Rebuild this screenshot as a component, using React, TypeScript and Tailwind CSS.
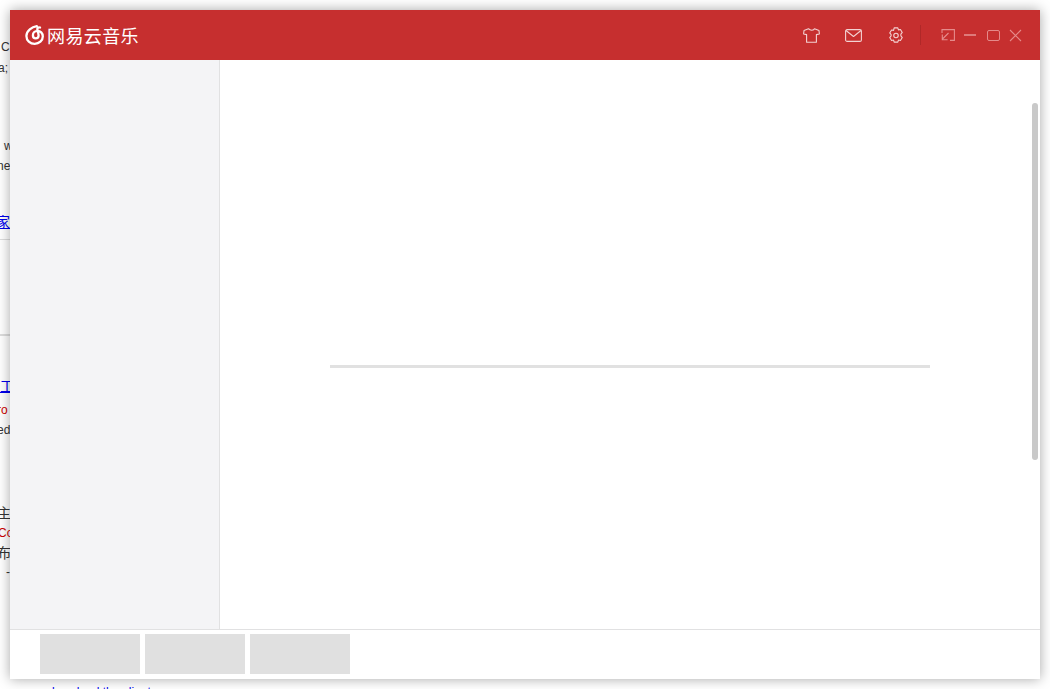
function Logo() {
  return (
    <svg width="20" height="20" viewBox="0 0 20 20" fill="none" stroke="#fff" strokeLinecap="round">
      <path d="M11.800 1.200C7 1.900 1.400 5.400 1.400 11c0 4.500 3.700 7.800 8.300 7.800 4.400 0 8.100-3.200 8.100-7.400 0-3.200-2.400-5.600-5.200-5.600-2.600 0-4.700 2-4.700 4.400 0 1.800 1.200 3.200 2.800 3.200s2.900-1.200 2.900-2.800c0-1.600-.7-4-1.200-6-.4-1.400.7-2.700 2.600-2.100" strokeWidth="2.300" />
    </svg>
  )
}

function HeaderIcons() {
  return (
    <div className="flex items-center">
      <svg className="mr-[25px]" width="17" height="15" viewBox="0 0 17 15" fill="none" stroke="#f3d2d2" strokeWidth="1.1" strokeLinejoin="round">
        <path d="M5.500.7 1 2.600.6 6l3 .6v7.600h9.800V6.600l3-.6-.4-3.400L11.500.7c-.5 2-4.500 2-6 0Z" />
      </svg>
      <svg className="mr-[26px]" width="17" height="13" viewBox="0 0 17 13" fill="none" stroke="#f3d2d2" strokeWidth="1.1" strokeLinejoin="round">
        <rect x=".6" y=".6" width="15.800" height="11.800" rx="1.500" />
        <path d="m1 1.500 7.500 6 7.500-6" />
      </svg>
      <svg className="mr-4" width="16" height="17" viewBox="0 0 15 16" fill="none" stroke="#f3d2d2" strokeWidth="1.050" strokeLinejoin="round">
        <path d="M5.800.8h3.400l.6 1.900 1.900-.4 1.700 2.800-1.300 1.500v1.800l1.300 1.500-1.700 2.800-1.900-.4-.6 1.900H5.800l-.6-1.900-1.900.4-1.700-2.800 1.300-1.500V7.100L1.600 5.600l1.700-2.800 1.900.4Z" />
        <circle cx="7.500" cy="8" r="2.100" />
      </svg>
      <div className="w-px h-5 bg-[#b02828] mr-5" />
      <svg className="mr-[9px]" width="14" height="12" viewBox="0 0 14 12" fill="none" stroke="#e58a8a" strokeWidth="1.1">
        <path d="M1 4V.6h12.400v10.800H9" />
        <path d="M7.500 4 1.500 10M1.300 5.500v5.300h5.300" />
      </svg>
      <div className="w-3 h-[2px] bg-[#de7a7a] mr-[11px]" />
      <div className="w-[13px] h-[11px] rounded-[2px] border border-[#e58a8a] mr-[9px]" />
      <svg className="mr-[18px]" width="13" height="13" viewBox="0 0 13 13" fill="none" stroke="#e58a8a" strokeWidth="1.1">
        <path d="m1 1 11 11M12 1 1 12" />
      </svg>
    </div>
  )
}

// page text that shows through on the left of the window
function PageBehind() {
  return (
    <div className="w-[1030px] h-[689px] overflow-hidden text-[12px] leading-[20px] text-[#333] font-['Liberation_Sans','Noto_Sans_CJK_SC',sans-serif]">
      <div className="pt-[37px] pl-px">C</div>
      <div className="mt-px ml-[-2px]">a;</div>
      <div className="mt-[58px] pl-1">w</div>
      <div className="ml-[-3px]">ne</div>
      <div className="mt-[36px] ml-[-4px] text-[14px] text-[#00e] underline">家</div>
      <div className="mt-[7px] h-px bg-[#ddd]" />
      <div className="mt-[94px] h-[2px] bg-[#ddd]" />
      <div className="mt-[40px] text-[14px] text-[#00e] underline">工</div>
      <div className="mt-1 ml-[-3px] text-[#c00]">ro</div>
      <div className="ml-[-3px]">ed</div>
      <div className="mt-[63px] ml-[-3px] text-[14px]">主</div>
      <div className="ml-[-2px] text-[#c00]">Co</div>
      <div className="ml-[-3px] text-[14px]">布</div>
      <div className="mt-[-1px] pl-[6px]">-</div>
      <div className="mt-[100px] ml-[48px] text-[#00e] whitespace-nowrap">download the client</div>
    </div>
  )
}

export default function App() {
  return (
    <div className="relative w-[1050px] h-[689px] overflow-hidden bg-white">
      <PageBehind />

      {/* player window */}
      <div className="absolute left-[10px] top-[10px] w-[1030px] h-[669px] flex flex-col bg-white shadow-[0_0_12px_rgba(0,0,0,0.35)]">
        <header className="h-[50px] shrink-0 bg-[#c62f2f] flex items-center justify-between">
          <div className="flex items-center pl-[15px]">
            <Logo />
            <span className="ml-[2px] text-[18px] tracking-[0.4px] text-white font-['Noto_Sans_CJK_SC',sans-serif]">网易云音乐</span>
          </div>
          <HeaderIcons />
        </header>

        <div className="flex-1 flex min-h-0">
          <aside className="w-[210px] shrink-0 bg-[#f4f4f6] border-r border-[#e1e1e2]" />
          <main className="relative flex-1 flex items-center justify-center">
            <div className="w-[600px] h-[3px] mt-[44px] bg-[#e1e1e1]" />
            <div className="absolute right-[2px] top-[43px] w-[6px] h-[357px] rounded-[3px] bg-[#c9c9c9]" />
          </main>
        </div>

        <footer className="h-[50px] shrink-0 border-t border-[#e1e1e2] flex gap-[5px] pl-[30px] pt-1">
          <div className="w-[100px] h-10 bg-[#e0e0e0]" />
          <div className="w-[100px] h-10 bg-[#e0e0e0]" />
          <div className="w-[100px] h-10 bg-[#e0e0e0]" />
        </footer>
      </div>
    </div>
  )
}
